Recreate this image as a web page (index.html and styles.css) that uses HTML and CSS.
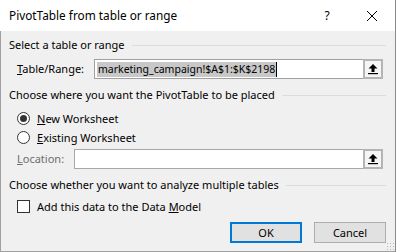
FILE: index.html
```html
<!DOCTYPE html>
<html>
<head>
<meta charset="utf-8">
<link rel="stylesheet" href="styles.css">
</head>
<body>
<div class="window">
  <div class="titlebar">
    <span class="title">PivotTable from table or range</span>
    <span class="help">?</span>
    <span class="close"><svg width="12" height="12" viewBox="0 0 12 12"><path d="M1 1 L11 11 M11 1 L1 11" stroke="#000" stroke-width="1" fill="none"/></svg></span>
  </div>
  <div class="content">
    <div class="group-head"><span>Select a table or range</span></div>
    <div class="row">
      <span class="label label-range"><u>T</u>able/Range:</span>
      <div class="input"><span class="sel">marketing_campaign!$A$1:$K$2198</span><span class="caret"></span></div>
      <div class="ref-btn"><svg width="12" height="12" viewBox="0 0 12 12"><path d="M6 1 L10.5 5.5 L7.5 5.5 L7.5 9 L4.5 9 L4.5 5.5 L1.5 5.5 Z" fill="#000"/><rect x="1" y="10" width="10" height="1.2" fill="#000"/></svg></div>
    </div>
    <div class="group-head"><span>Choose where you want the PivotTable to be placed</span></div>
    <div class="option option-first"><span class="radio checked"></span><span><u>N</u>ew Worksheet</span></div>
    <div class="option"><span class="radio"></span><span><u>E</u>xisting Worksheet</span></div>
    <div class="row row-loc">
      <span class="label label-loc disabled"><u>L</u>ocation:</span>
      <div class="input input-loc"></div>
      <div class="ref-btn"><svg width="12" height="12" viewBox="0 0 12 12"><path d="M6 1 L10.5 5.5 L7.5 5.5 L7.5 9 L4.5 9 L4.5 5.5 L1.5 5.5 Z" fill="#000"/><rect x="1" y="10" width="10" height="1.2" fill="#000"/></svg></div>
    </div>
    <div class="group-head"><span>Choose whether you want to analyze multiple tables</span></div>
    <div class="option option-check"><span class="checkbox"></span><span>Add this data to the Data <u>M</u>odel</span></div>
    <div class="buttons">
      <div class="btn btn-default">OK</div>
      <div class="btn">Cancel</div>
    </div>
    <div class="grip"></div>
  </div>
</div>
</body>
</html>
```
FILE: styles.css
```css
* { box-sizing: border-box; }
html, body { margin: 0; padding: 0; }
body {
  width: 396px;
  height: 252px;
  overflow: hidden;
  font-family: "Noto Sans", "Open Sans", sans-serif;
  font-size: 11px;
  color: #000;
  background: #f0f0f0;
}
.window {
  width: 396px;
  height: 252px;
  display: flex;
  flex-direction: column;
  border-right: 1px solid #8a8a8a;
}
.titlebar {
  height: 31px;
  background: #fff;
  display: flex;
  align-items: center;
  padding-left: 9px;
  flex: none;
}
.title {
  flex: 1;
  font-size: 11.8px;
  line-height: 16px;
  margin-top: -1px;
}
.help {
  width: 20px;
  text-align: center;
  margin-right: 29px;
  font-size: 12px;
}
.close {
  width: 12px;
  height: 12px;
  margin-right: 17px;
  display: flex;
}
.content {
  flex: 1;
  position: relative;
  border-left: 1px solid #a0a0a0;
  border-bottom: 1px solid #a0a0a0;
  padding: 6px 9px 0 8px;
  display: flex;
  flex-direction: column;
}
.group-head {
  display: flex;
  align-items: center;
  height: 16px;
  line-height: 16px;
  white-space: nowrap;
}
.group-head::after {
  content: "";
  flex: 1;
  height: 1px;
  background: #dcdcdc;
  margin-left: 7px;
}
.row {
  display: flex;
  align-items: center;
  height: 20px;
  margin: 6px 0 8px 8px;
  padding-right: 3px;
}
.label { flex: none; line-height: 16px; }
.label-range { width: 77px; }
.label-loc { width: 57px; }
.disabled { color: #6d6d6d; }
.input {
  flex: 1;
  height: 20px;
  background: #fff;
  border: 1px solid #a0a0a0;
  border-right: none;
  display: flex;
  align-items: center;
  padding-left: 2px;
}
.sel {
  background: #c8c8c8;
  font-size: 10.5px;
  line-height: 15px;
  height: 15px;
  padding: 0 1px;
}
.caret {
  width: 1px;
  height: 15px;
  background: #000;
}
.ref-btn {
  width: 20px;
  height: 20px;
  border: 2px solid #b4b4b4;
  background: #f5f5f5;
  display: flex;
  align-items: center;
  justify-content: center;
  flex: none;
}
.option {
  display: flex;
  align-items: center;
  height: 19px;
  margin-left: 8px;
  line-height: 16px;
}
.option-first { margin-top: 6px; }
.radio {
  width: 13px;
  height: 13px;
  border: 1px solid #333;
  border-radius: 50%;
  background: #fff;
  margin-right: 7px;
  display: flex;
  align-items: center;
  justify-content: center;
}
.radio.checked::after {
  content: "";
  width: 7px;
  height: 7px;
  border-radius: 50%;
  background: #333;
}
.row-loc { margin: 2px 0 8px 8px; }
.input-loc { border-color: #a8a8a8; }
.checkbox {
  width: 13px;
  height: 13px;
  border: 1px solid #333;
  background: #fff;
  margin-right: 7px;
}
.option-check { margin-top: 4px; }
.buttons {
  display: flex;
  justify-content: flex-end;
  gap: 12px;
  margin-top: 6px;
}
.btn {
  width: 72px;
  height: 21px;
  border: 1px solid #adadad;
  background: #e1e1e1;
  display: flex;
  align-items: center;
  justify-content: center;
  line-height: 16px;
}
.btn-default {
  border: 2px solid #0078d7;
}
.grip {
  position: absolute;
  right: 1px;
  bottom: 1px;
  width: 8px;
  height: 8px;
  background-image: radial-gradient(circle, #b8b8b8 0.9px, transparent 1px);
  background-size: 3px 3px;
}
```
